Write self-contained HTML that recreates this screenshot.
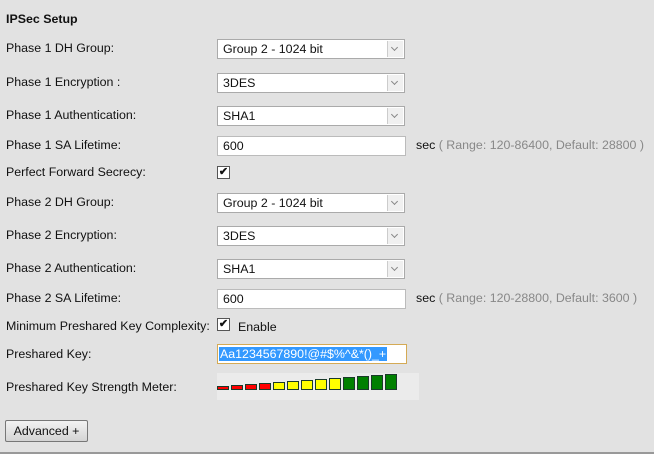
<!DOCTYPE html>
<html><head><meta charset="utf-8"><style>
body{margin:0;width:654px;height:454px;background:#e2e2e2;font-family:"Liberation Sans",Arial,sans-serif;font-size:12.4px;color:#111;position:relative;overflow:hidden}
.a{position:absolute;white-space:nowrap}
.l{left:6px}
.sel{position:absolute;left:217px;width:188px;height:20px;background:#fff;border:1px solid #aaa;box-sizing:border-box}
.sel span{position:absolute;left:5px;top:2px}
.sel i{position:absolute;right:1px;top:1px;width:15px;height:16px;border-left:1px solid #ccc;background:#f0f0f0}
.sel i:after{content:"";position:absolute;left:4px;top:4px;width:4px;height:4px;border-right:1.5px solid #888;border-bottom:1.5px solid #888;transform:rotate(45deg)}
.in{position:absolute;left:217px;width:189px;height:20px;background:#fff;border:1px solid #bbb;box-sizing:border-box}
.in span{position:absolute;left:5px;top:2px}
.cb{position:absolute;left:217px;width:13px;height:13px;border:1px solid #555;background:#fff;box-sizing:border-box;font-size:11px;line-height:11px;text-align:center;font-weight:bold}
.g{color:#888}
.bar{position:absolute;bottom:64px;width:12px;border:1px solid #1a3a2a;box-sizing:border-box}
</style></head><body>
<div class="a l" style="top:12px;font-weight:bold">IPSec Setup</div>
<div class="a l" style="top:41px">Phase 1 DH Group:</div>
<div class="sel" style="top:39px"><span>Group 2 - 1024 bit</span><i></i></div>
<div class="a l" style="top:75px">Phase 1 Encryption :</div>
<div class="sel" style="top:73px"><span>3DES</span><i></i></div>
<div class="a l" style="top:108px">Phase 1 Authentication:</div>
<div class="sel" style="top:106px"><span>SHA1</span><i></i></div>
<div class="a l" style="top:138px">Phase 1 SA Lifetime:</div>
<div class="in" style="top:136px"><span>600</span></div>
<div class="a" style="left:416px;top:138px">sec <span class="g">( Range: 120-86400, Default: 28800 )</span></div>
<div class="a l" style="top:165px">Perfect Forward Secrecy:</div>
<div class="cb" style="top:166px">✔</div>
<div class="a l" style="top:195px">Phase 2 DH Group:</div>
<div class="sel" style="top:193px"><span>Group 2 - 1024 bit</span><i></i></div>
<div class="a l" style="top:228px">Phase 2 Encryption:</div>
<div class="sel" style="top:226px"><span>3DES</span><i></i></div>
<div class="a l" style="top:261px">Phase 2 Authentication:</div>
<div class="sel" style="top:259px"><span>SHA1</span><i></i></div>
<div class="a l" style="top:291px">Phase 2 SA Lifetime:</div>
<div class="in" style="top:289px"><span>600</span></div>
<div class="a" style="left:416px;top:291px">sec <span class="g">( Range: 120-28800, Default: 3600 )</span></div>
<div class="a l" style="top:319px">Minimum Preshared Key Complexity:</div>
<div class="cb" style="top:318px">✔</div>
<div class="a" style="left:238px;top:320px">Enable</div>
<div class="a l" style="top:347px">Preshared Key:</div>
<div class="in" style="top:344px;width:190px;height:20px;border:1px solid #d4aa55"><span style="left:1px;top:2px;background:#3399ff;color:#fff;padding:0 1px">Aa1234567890!@#$%^&amp;*()_+</span></div>
<div class="a l" style="top:380px">Preshared Key Strength Meter:</div>
<div class="a" style="left:217px;top:373px;width:202px;height:27px;background:#ebebeb"></div>
<div class="bar" style="left:217px;height:4px;background:#f00"></div>
<div class="bar" style="left:231px;height:5px;background:#f00"></div>
<div class="bar" style="left:245px;height:6px;background:#f00"></div>
<div class="bar" style="left:259px;height:7px;background:#f00"></div>
<div class="bar" style="left:273px;height:8px;background:#ff0"></div>
<div class="bar" style="left:287px;height:9px;background:#ff0"></div>
<div class="bar" style="left:301px;height:10px;background:#ff0"></div>
<div class="bar" style="left:315px;height:11px;background:#ff0"></div>
<div class="bar" style="left:329px;height:12px;background:#ff0"></div>
<div class="bar" style="left:343px;height:13px;background:#008000"></div>
<div class="bar" style="left:357px;height:14px;background:#008000"></div>
<div class="bar" style="left:371px;height:15px;background:#008000"></div>
<div class="bar" style="left:385px;height:16px;background:#008000"></div>
<div class="a" style="left:5px;top:420px;width:83px;height:22px;border:1px solid #777;border-radius:2px;background:linear-gradient(#f2f2f2,#d4d4d4);box-sizing:border-box;text-align:center;line-height:20px">Advanced +</div>
<div class="a" style="left:0;top:452px;width:654px;height:2px;background:#999"></div>
</body></html>
